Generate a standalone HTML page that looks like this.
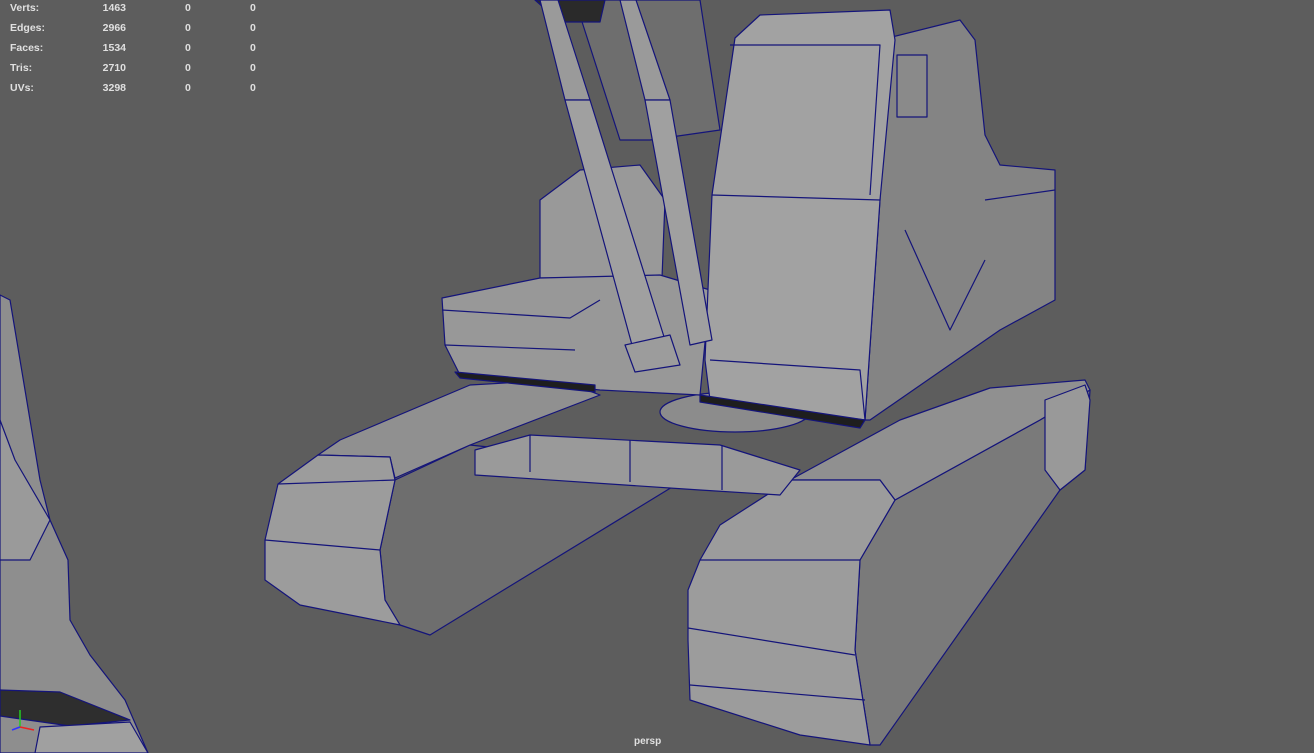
<!DOCTYPE html>
<html><head><meta charset="utf-8"><style>
body{margin:0;width:1314px;height:753px;overflow:hidden;background:#5d5d5d;font-family:"Liberation Sans",sans-serif}
svg{position:absolute;left:0;top:0}
.hud{position:absolute;color:#e0e0e0;font-size:10.5px;font-weight:bold}
.r{text-align:right;width:40px}
</style></head><body>
<svg width="1314" height="753" viewBox="0 0 1314 753" stroke="#14147a" stroke-width="1.2" stroke-linejoin="round">
<!-- left object -->
<polygon points="0,295 10,300 40,480 50,520 68,560 70,620 90,655 125,700 148,753 0,753" fill="#8e8e8e"/>
<polygon points="0,420 15,460 50,520 30,560 0,560" fill="#9a9a9a"/>
<polygon points="0,690 60,692 130,720 70,726 0,716" fill="#2e2e2e"/>
<polygon points="40,727 130,722 148,753 35,753" fill="#a0a0a0"/>
<!-- right track -->
<polygon points="895,500 1040,420 1090,390 1085,470 1060,490 880,745 870,745 855,650 860,560" fill="#7a7a7a"/>
<polygon points="790,480 900,420 990,388 1085,380 1090,390 1040,420 895,500 880,480" fill="#909090"/>
<polygon points="1045,400 1085,385 1090,400 1085,470 1060,490 1045,470" fill="#999"/>
<polygon points="688,590 700,560 720,525 790,480 880,480 895,500 860,560 855,650 870,745 800,735 690,700 688,640" fill="#9c9c9c"/>
<polyline points="688,628 855,655" fill="none"/><polyline points="700,560 860,560" fill="none"/>
<polyline points="690,685 865,700" fill="none"/>
<!-- left track -->
<polygon points="395,480 470,445 700,470 430,635 400,625 385,600 380,550" fill="#6e6e6e"/>
<polygon points="318,455 340,440 470,385 560,380 600,395 470,445 395,478 390,457" fill="#909090"/>
<polygon points="265,540 278,484 318,455 390,457 395,480 380,550 385,600 400,625 300,605 265,580" fill="#9c9c9c"/>
<polyline points="265,540 380,550" fill="none"/><polyline points="278,484 395,480" fill="none"/>
<!-- center crossbar / turntable -->
<ellipse cx="735" cy="412" rx="75" ry="20" fill="#8c8c8c"/>
<polygon points="475,450 530,435 720,445 800,470 780,495 700,490 475,475" fill="#9a9a9a"/>
<polyline points="530,435 530,472" fill="none"/><polyline points="630,440 630,482" fill="none"/><polyline points="722,445 722,490" fill="none"/>
<!-- back block -->
<polygon points="540,200 580,170 640,165 665,200 662,278 540,278" fill="#999"/>
<!-- body deck -->
<polygon points="442,298 540,278 660,275 710,290 700,395 600,390 460,375 445,345" fill="#989898"/>
<polyline points="442,310 570,318 600,300" fill="none"/><polyline points="445,345 575,350" fill="none"/>
<polygon points="455,372 595,385 595,392 460,378" fill="#1e1e1e"/>
<!-- cab side -->
<polygon points="880,40 960,20 975,40 985,135 1000,165 1055,170 1055,300 1000,330 870,420 865,420 880,200" fill="#848484"/>
<polyline points="985,200 1055,190" fill="none"/><polyline points="905,230 950,330 985,260" fill="none"/>
<!-- cab front -->
<polygon points="712,195 735,38 760,15 890,10 895,40 880,200 865,420 710,400 705,360" fill="#a2a2a2"/>
<polyline points="712,195 880,200" fill="none"/><polyline points="730,45 880,45 870,195" fill="none"/>
<polyline points="710,360 860,370 865,420" fill="none"/>
<polygon points="700,395 865,420 860,428 700,402" fill="#1e1e1e"/>
<rect x="897" y="55" width="30" height="62" fill="#8a8a8a"/>
<!-- boom -->
<polygon points="575,0 700,0 720,130 650,140 620,140" fill="#6e6e6e"/>
<polygon points="535,0 605,0 600,22 560,22" fill="#2a2a2a"/>
<polygon points="540,0 558,0 590,100 565,100" fill="#9a9a9a"/>
<polygon points="620,0 636,0 670,100 645,100" fill="#9a9a9a"/>
<polygon points="565,100 590,100 665,340 632,345" fill="#a0a0a0"/>
<polygon points="645,100 670,100 712,340 690,345" fill="#a0a0a0"/>
<polygon points="625,345 670,335 680,365 635,372" fill="#9c9c9c"/>
<!-- axis -->
<g stroke-width="1.5"><line x1="20" y1="727" x2="20" y2="710" stroke="#2c2"/><line x1="20" y1="727" x2="34" y2="730" stroke="#e22"/><line x1="20" y1="727" x2="12" y2="730" stroke="#33f"/></g>
</svg>
<div class="hud" style="left:10px;top:-2px;line-height:20px">Verts:<br>Edges:<br>Faces:<br>Tris:<br>UVs:</div>
<div class="hud r" style="left:86px;top:-2px;line-height:20px">1463<br>2966<br>1534<br>2710<br>3298</div>
<div class="hud" style="left:185px;top:-2px;line-height:20px">0<br>0<br>0<br>0<br>0</div>
<div class="hud" style="left:250px;top:-2px;line-height:20px">0<br>0<br>0<br>0<br>0</div>
<div class="hud" style="left:634px;top:736px;font-size:10px">persp</div>
</body></html>
